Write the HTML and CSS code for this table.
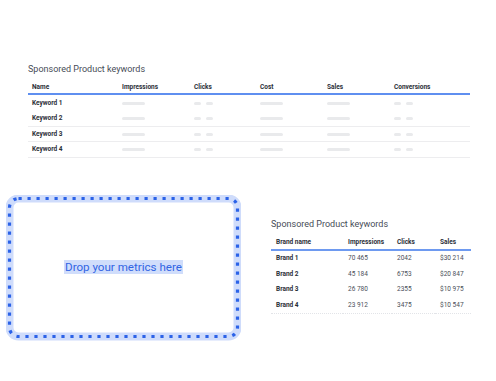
FILE: index.html
```html
<!DOCTYPE html>
<html>
<head>
<meta charset="utf-8">
<link rel="stylesheet" href="styles.css">
</head>
<body>
<div class="page">
  <section class="top">
    <h2 class="title">Sponsored Product keywords</h2>
    <table class="kw">
      <thead>
        <tr><th class="c1">Name</th><th class="c2">Impressions</th><th class="c3">Clicks</th><th class="c4">Cost</th><th class="c5">Sales</th><th class="c6">Conversions</th></tr>
      </thead>
      <tbody>
        <tr class="first"><td class="name">Keyword 1</td><td><span class="bar long"></span></td><td><span class="bar short"></span><span class="bar short"></span></td><td><span class="bar long"></span></td><td><span class="bar long"></span></td><td><span class="bar short"></span><span class="bar short"></span></td></tr>
        <tr class="sep"><td class="name">Keyword 2</td><td><span class="bar long"></span></td><td><span class="bar short"></span><span class="bar short"></span></td><td><span class="bar long"></span></td><td><span class="bar long"></span></td><td><span class="bar short"></span><span class="bar short"></span></td></tr>
        <tr class="sep"><td class="name">Keyword 3</td><td><span class="bar long"></span></td><td><span class="bar short"></span><span class="bar short"></span></td><td><span class="bar long"></span></td><td><span class="bar long"></span></td><td><span class="bar short"></span><span class="bar short"></span></td></tr>
        <tr class="sep"><td class="name">Keyword 4</td><td><span class="bar long"></span></td><td><span class="bar short"></span><span class="bar short"></span></td><td><span class="bar long"></span></td><td><span class="bar long"></span></td><td><span class="bar short"></span><span class="bar short"></span></td></tr>
      </tbody>
    </table>
  </section>
  <section class="bottom">
    <div class="drop">
      <svg class="drop-border" width="235" height="146" viewBox="0 0 235 146">
        <rect x="3.5" y="3.5" width="228" height="138" rx="9" ry="9" fill="none" stroke="#cfdcfb" stroke-width="8"/>
        <rect x="3.5" y="3.5" width="228" height="138" rx="9" ry="9" fill="none" stroke="#2b62e8" stroke-width="3.2" stroke-dasharray="3.2 5.8"/>
      </svg>
      <span class="drop-text">Drop your metrics here</span>
    </div>
    <div class="brands">
      <h2 class="title">Sponsored Product keywords</h2>
      <table class="br">
        <thead>
          <tr><th class="b1">Brand name</th><th class="b2">Impressions</th><th class="b3">Clicks</th><th class="b4">Sales</th></tr>
        </thead>
        <tbody>
          <tr><td class="name">Brand 1</td><td>70 465</td><td>2042</td><td>$30 214</td></tr>
          <tr><td class="name">Brand 2</td><td>45 184</td><td>6753</td><td>$20 847</td></tr>
          <tr><td class="name">Brand 3</td><td>26 780</td><td>2355</td><td>$10 975</td></tr>
          <tr class="last"><td class="name">Brand 4</td><td>23 912</td><td>3475</td><td>$10 547</td></tr>
        </tbody>
      </table>
    </div>
  </section>
</div>
</body>
</html>
```
FILE: styles.css
```css
html, body {
  margin: 0;
  padding: 0;
  background: #ffffff;
}
body {
  font-family: Roboto, "Liberation Sans", sans-serif;
  color: #2b2f38;
  width: 496px;
  height: 381px;
  overflow: hidden;
}
.page {
  display: flex;
  flex-direction: column;
}
.top {
  padding: 63px 0 0 28px;
}
.title {
  margin: 0;
  font-size: 9px;
  line-height: 13px;
  font-weight: 400;
  color: #474c57;
}
table {
  border-collapse: collapse;
  table-layout: fixed;
}
th {
  font-size: 6.5px;
  font-weight: 700;
  text-align: left;
  color: #2b2f38;
  padding: 0 0 0 4px;
  height: 13px;
  border-bottom: 2px solid #5f8ff0;
  vertical-align: middle;
}
td {
  font-size: 6.5px;
  padding: 0 0 0 4px;
  vertical-align: middle;
  color: #4a4f59;
}
td.name {
  font-weight: 700;
  color: #2b2f38;
}
.kw {
  width: 442px;
  margin-top: 4px;
}
.kw tr.first td {
  height: 16px;
}
.kw tr.sep td {
  height: 14.5px;
  border-bottom: 1px solid #ededef;
}
.c1 { width: 86px; }
.c2 { width: 68px; }
.c3 { width: 62px; }
.c4 { width: 63px; }
.c5 { width: 63px; }
.c6 { width: 76px; }
.bar {
  display: inline-block;
  height: 3px;
  background: #e9eaec;
  vertical-align: middle;
  border-radius: 1.5px;
}
.bar.long { width: 23px; }
.bar.short { width: 7px; margin-right: 5px; }

.bottom {
  display: flex;
  align-items: flex-start;
  margin-top: 37px;
  padding-left: 6px;
}
.drop {
  position: relative;
  width: 235px;
  height: 146px;
  display: flex;
  align-items: center;
  justify-content: center;
  flex-shrink: 0;
}
.drop-border {
  position: absolute;
  left: 0;
  top: 0;
}
.drop-text {
  position: relative;
  font-size: 11.6px;
  line-height: 14px;
  color: #3064e4;
  background: #d0ddfb;
  padding: 0 1px;
  margin-top: -1px;
}
.brands {
  margin-left: 30px;
  margin-top: 23px;
}
.br {
  width: 200px;
  margin-top: 5px;
}
.br th { padding-left: 5px; border-bottom: 2px solid #6e9af0; }
.br td { padding-left: 5px; height: 15.5px; }
.br tr.last td { border-bottom: 1px dotted #e2e4e8; }
.b1 { width: 67px; }
.b2 { width: 44px; }
.b3 { width: 38px; }
.b4 { width: 31px; }
```
